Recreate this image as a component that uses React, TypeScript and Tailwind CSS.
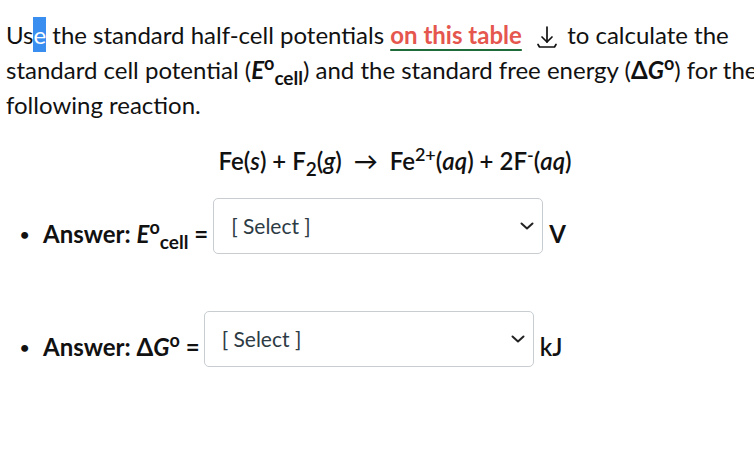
function DownloadIcon() {
  return (
    <svg width="22" height="26" viewBox="0 0 22 26" fill="none" stroke="#111" strokeWidth="1.7" strokeLinecap="round" strokeLinejoin="round" className="inline-block align-[-6px] ml-[8px] mr-[3px]">
      <path d="M11 3v15" />
      <path d="M6 13l5 5 5-5" />
      <path d="M2 20.5l1.5 2.5h15l1.5-2.5" />
    </svg>
  )
}

function Chevron() {
  return (
    <svg width="14" height="8" viewBox="0 0 14 8" fill="none" stroke="#222" strokeWidth="2" strokeLinecap="round" strokeLinejoin="round">
      <path d="M1.5 1.5 7 6.5l5.5-5" />
    </svg>
  )
}

function SelectBox() {
  return (
    <div className="w-[330px] h-[56px] mb-[16px] flex items-center justify-between rounded-[5px] border border-[#c7cdd1] bg-white pl-[17px] pr-[8px] font-normal">
      <span className="text-[21px] text-[#2d3b45]">[ Select ]</span>
      <Chevron />
    </div>
  )
}

const sup = 'relative top-[-9px] text-[18px] leading-none'
const sub = 'relative top-[6px] text-[19px] leading-none'

export default function App() {
  return (
    <div className="w-[754px] h-[472px] bg-white text-[#111] font-['Lato','Liberation_Sans',sans-serif] overflow-hidden">
      <p className="pt-[17px] pl-[6px] text-[24px] leading-[35px] whitespace-nowrap">
        Us<span className="bg-[#3a8ef0] text-white inline-block">e</span> the standard half-cell potentials{' '}
        <span className="text-[#e5574e] font-bold underline decoration-[#1f6b3a] decoration-2 underline-offset-[5px]">on this table</span>{' '}
        <DownloadIcon /> to calculate the
        <br />
        standard cell potential (
        <b><i>E</i><span className={sup}>o</span><span className={sub}>cell</span></b>) and the standard free energy (
        <b>Δ<i>G</i><span className={sup}>o</span></b>) for the
        <br />
        following reaction.
      </p>

      <div className="mt-[21px] flex justify-center pl-[36px] text-[24px] font-semibold">
        <span>
          Fe(<i>s</i>) + F<span className={sub}>2</span>(<i>g</i>) &nbsp;→&nbsp; Fe<span className={sup}>2+</span>(<i>aq</i>) + 2F<span className={sup}>-</span>(<i>aq</i>)
        </span>
      </div>

      <ul className="mt-[19px] pl-[20px] text-[24px] font-bold">
        <li className="flex items-center h-[72px]">
          <span className="w-[23px] text-[16px]">•</span>
          <span>
            Answer: <i>E</i><span className={sup}>o</span><span className={sub}>cell</span> =
          </span>
          <span className="ml-[5px]">
            <SelectBox />
          </span>
          <span className="ml-[6px]">V</span>
        </li>
        <li className="flex items-center h-[72px] mt-[41px]">
          <span className="w-[23px] text-[16px]">•</span>
          <span>
            Answer: Δ<i>G</i><span className={sup}>o</span> =
          </span>
          <span className="ml-[4px]">
            <SelectBox />
          </span>
          <span className="ml-[6px] font-semibold">kJ</span>
        </li>
      </ul>
    </div>
  )
}
